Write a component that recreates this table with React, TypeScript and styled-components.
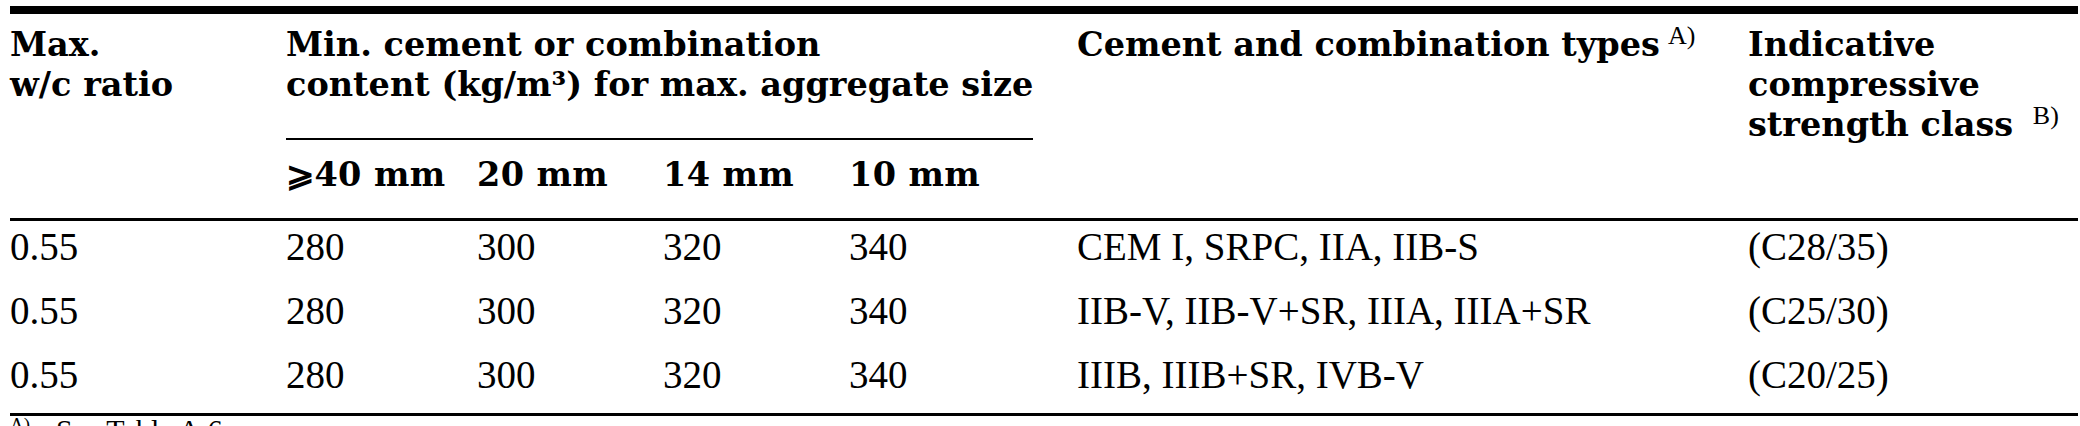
import styled, { createGlobalStyle } from 'styled-components';

interface IMixRow {
  ratio: string;
  contents: string[];
  types: string;
  strength: string;
}

const SIZES = ['⩾40 mm', '20 mm', '14 mm', '10 mm'];

const ROWS: IMixRow[] = [
  { ratio: '0.55', contents: ['280', '300', '320', '340'], types: 'CEM I, SRPC, IIA, IIB-S', strength: '(C28/35)' },
  { ratio: '0.55', contents: ['280', '300', '320', '340'], types: 'IIB-V, IIB-V+SR, IIIA, IIIA+SR', strength: '(C25/30)' },
  { ratio: '0.55', contents: ['280', '300', '320', '340'], types: 'IIIB, IIIB+SR, IVB-V', strength: '(C20/25)' },
];

const COLUMNS = '276px 191px 186px 186px 228px 671px 1fr';

const GlobalStyle = createGlobalStyle`
  html, body {
    margin: 0;
    padding: 0;
    background: #ffffff;
    color: #000000;
  }
`;

export default function App() {
  return (
    <>
      <GlobalStyle />
      <PageSt>
        <TableSt>
          <HeadSt>
            <HeadCell col="1" row="1 / 3">
              Max.
              <br />
              w/c ratio
            </HeadCell>
            <GroupCell>
              Min. cement or combination
              <br />
              content (kg/m³) for max. aggregate size
            </GroupCell>
            {SIZES.map((size, i) => (
              <SubCell key={size} col={String(i + 2)}>
                {size}
              </SubCell>
            ))}
            <HeadCell col="6" row="1 / 3">
              Cement and combination types<Note>A)</Note>
            </HeadCell>
            <HeadCell col="7" row="1 / 3">
              Indicative
              <br />
              compressive
              <br />
              strength class <Note>B)</Note>
            </HeadCell>
          </HeadSt>
          {ROWS.map((row, i) => (
            <RowSt key={i}>
              <Cell>{row.ratio}</Cell>
              {row.contents.map((c, j) => (
                <Cell key={j}>{c}</Cell>
              ))}
              <Cell>{row.types}</Cell>
              <Cell>{row.strength}</Cell>
            </RowSt>
          ))}
        </TableSt>
        <FootnoteSt>
          <FootMark>A)</FootMark>See Table A.6
        </FootnoteSt>
      </PageSt>
    </>
  );
}

const PageSt = styled.div`
  padding: 6px 2px 0 10px;
`;

const TableSt = styled.div`
  border-top: 8px solid #000;
  border-bottom: 3px solid #000;
`;

const HeadSt = styled.div`
  display: grid;
  grid-template-columns: ${COLUMNS};
  grid-template-rows: auto auto;
  border-bottom: 3px solid #000;
  font-family: 'DejaVu Serif', serif;
  font-weight: 700;
  font-size: 33.5px;
  line-height: 40px;
  white-space: nowrap;
`;

const HeadCell = styled.div<{ col: string; row: string }>`
  grid-column: ${({ col }) => col};
  grid-row: ${({ row }) => row};
  padding-top: 11px;
`;

const GroupCell = styled.div`
  grid-column: 2 / 6;
  grid-row: 1;
  margin-right: 44px;
  padding: 11px 0 33px;
  border-bottom: 2px solid #000;
`;

const SubCell = styled.div<{ col: string }>`
  grid-column: ${({ col }) => col};
  grid-row: 2;
  padding: 15px 0 23px;
  letter-spacing: 0.4px;
`;

const Note = styled.sup`
  font-family: 'Liberation Serif', serif;
  font-weight: 400;
  font-size: 26px;
  line-height: 0;
  vertical-align: 12px;
  margin-left: 8px;
`;

const RowSt = styled.div`
  display: grid;
  grid-template-columns: ${COLUMNS};
  font-family: 'Liberation Serif', serif;
  font-size: 39px;
  line-height: 52px;
  padding-bottom: 12px;
`;

const Cell = styled.div`
  white-space: nowrap;
`;

const FootnoteSt = styled.div`
  font-family: 'Liberation Serif', serif;
  font-size: 30px;
  line-height: 28px;
`;

const FootMark = styled.sup`
  font-size: 19px;
  line-height: 0;
  vertical-align: 9px;
  margin-right: 26px;
`;
